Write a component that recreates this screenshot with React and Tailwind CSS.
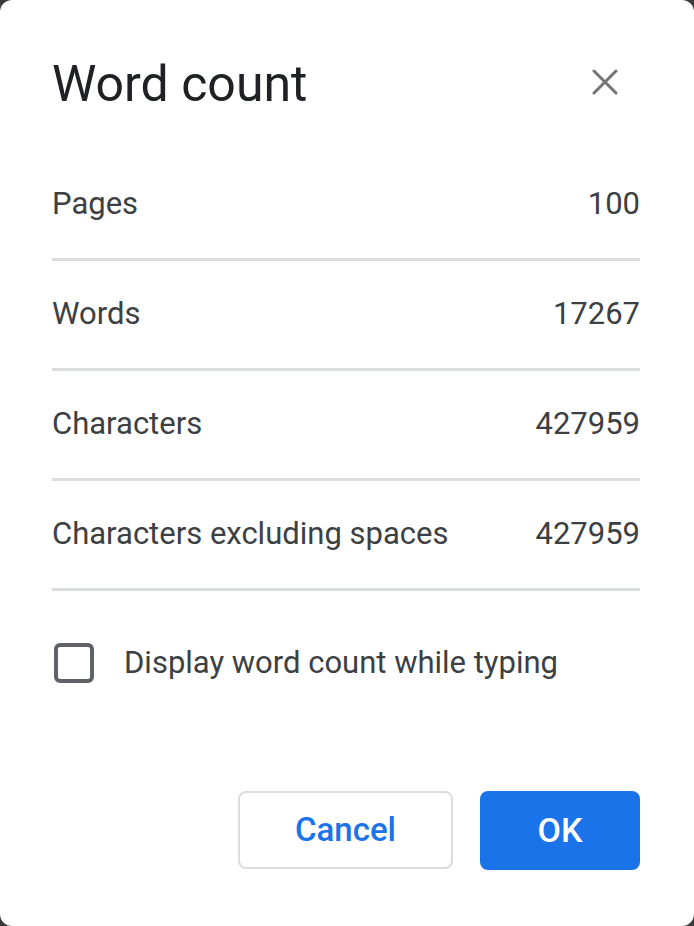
export default function App() {
  const rows = [
    ["Pages", "100"],
    ["Words", "17267"],
    ["Characters", "427959"],
    ["Characters excluding spaces", "427959"],
  ];
  return (
    <div className="w-[694px] h-[926px] bg-[#3a3a3a] overflow-hidden">
      <div
        className="w-full h-full bg-white rounded-[12px] flex flex-col pl-[52px] pr-[54px] pt-[56px]"
        style={{ fontFamily: "Roboto, 'Noto Sans', sans-serif" }}
      >
        <div className="flex items-center justify-between h-[56px] mb-[39px]">
          <h1 className="text-[50px] leading-[56px] text-[#202124] font-normal">
            Word count
          </h1>
          <button className="w-[40px] h-[40px] flex items-center justify-center mr-[15px] mt-[-4px]">
            <svg width="26" height="26" viewBox="0 0 26 26">
              <path d="M2 2 L24 24 M24 2 L2 24" stroke="#737373" strokeWidth="3" strokeLinecap="round" />
            </svg>
          </button>
        </div>
        {rows.map(([label, value]) => (
          <div
            key={label}
            className="h-[110px] flex items-center justify-between border-b-[3px] border-[#dadce0] text-[31px] text-[#3c4043]"
          >
            <span>{label}</span>
            <span>{value}</span>
          </div>
        ))}
        <div className="flex items-center mt-[52px] h-[40px] pl-[2px]">
          <div className="w-[40px] h-[40px] border-[4px] border-[#5f6368] rounded-[6px]" />
          <span className="ml-[30px] text-[31px] text-[#3c4043]">Display word count while typing</span>
        </div>
        <div className="flex justify-end gap-[27px] mt-[108px]">
          <button className="w-[215px] h-[78px] border-2 border-[#dadce0] rounded-[8px] text-[#1a73e8] text-[33px] font-medium bg-white">
            Cancel
          </button>
          <button className="w-[160px] h-[79px] rounded-[8px] bg-[#1a73e8] text-white text-[34px] font-medium">
            OK
          </button>
        </div>
      </div>
    </div>
  );
}
